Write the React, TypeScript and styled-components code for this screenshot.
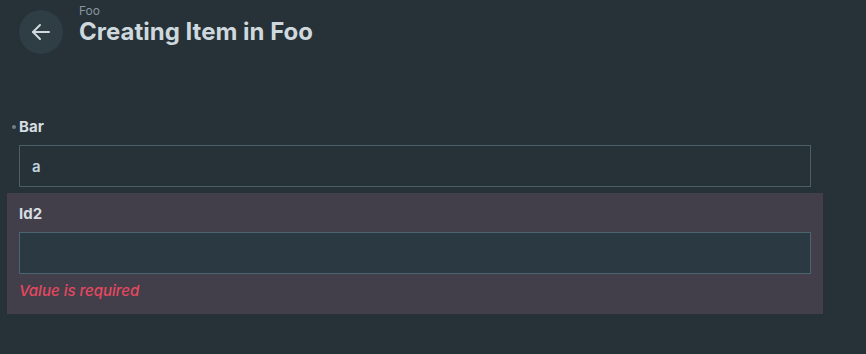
import React from 'react';
import styled, { createGlobalStyle } from 'styled-components';

const GlobalStyle = createGlobalStyle`
  html, body {
    margin: 0;
    padding: 0;
    background: #263238;
    font-family: Inter, "Noto Sans", sans-serif;
  }
`;

const Page = styled.div`
  width: 866px;
  height: 354px;
  background: #263238;
  color: #cfd8dc;
  overflow: hidden;
`;

const Header = styled.div`
  display: flex;
  align-items: flex-start;
  gap: 16px;
  padding: 10px 0 0 19px;
  height: 100px;
  box-sizing: border-box;
`;

const BackButton = styled.button`
  width: 44px;
  height: 44px;
  border-radius: 50%;
  border: none;
  background: #2f3d45;
  display: flex;
  align-items: center;
  justify-content: center;
  padding: 0;
  color: #cfd8dc;
  cursor: pointer;
`;

const Titles = styled.div`
  display: flex;
  flex-direction: column;
  margin-top: -6px;
`;

const Breadcrumb = styled.span`
  font-size: 12px;
  line-height: 14px;
  color: #8796a0;
`;

const Title = styled.h1`
  margin: 0;
  font-size: 24px;
  line-height: 28px;
  font-weight: 700;
  color: #cfd8dc;
`;

const Form = styled.div`
  width: 816px;
  margin-left: 7px;
  padding-top: 11px;
`;

const Field = styled.div<{ $invalid?: boolean }>`
  padding: ${p => (p.$invalid ? '11px 12px 14px' : '6px 12px')};
  background: ${p => (p.$invalid ? '#423f4a' : 'transparent')};
`;

const Label = styled.label<{ $required?: boolean }>`
  position: relative;
  display: block;
  font-size: 15px;
  line-height: 20px;
  font-weight: 700;
  color: #d5dde1;
  margin-bottom: 8px;

  ${p =>
    p.$required &&
    `&::before {
      content: '';
      position: absolute;
      left: -7px;
      top: 8px;
      width: 4px;
      height: 4px;
      border-radius: 50%;
      background: #6f8089;
    }`}
`;

const Input = styled.input<{ $invalid?: boolean }>`
  display: block;
  width: 792px;
  height: 42px;
  box-sizing: border-box;
  border: 1px solid ${p => (p.$invalid ? '#4a6570' : '#4c5f69')};
  background: ${p => (p.$invalid ? '#2b3a42' : '#263238')};
  color: #c3d3de;
  font-family: inherit;
  font-size: 15px;
  font-weight: 600;
  padding: 0 12px;
  outline: none;
`;

const ErrorText = styled.div`
  margin-top: 8px;
  font-size: 15px;
  line-height: 18px;
  font-weight: 500;
  font-style: italic;
  color: #e6485f;
`;

const App: React.FC = () => {
  return (
    <Page>
      <GlobalStyle />
      <Header>
        <BackButton aria-label="Back">
          <svg width="24" height="24" viewBox="0 0 24 24" fill="none" stroke="currentColor" strokeWidth="2" strokeLinecap="round" strokeLinejoin="round">
            <path d="M20 12H4" />
            <path d="M11 5l-7 7 7 7" />
          </svg>
        </BackButton>
        <Titles>
          <Breadcrumb>Foo</Breadcrumb>
          <Title>Creating Item in Foo</Title>
        </Titles>
      </Header>
      <Form>
        <Field>
          <Label $required>Bar</Label>
          <Input defaultValue="a" />
        </Field>
        <Field $invalid>
          <Label>Id2</Label>
          <Input $invalid />
          <ErrorText>Value is required</ErrorText>
        </Field>
      </Form>
    </Page>
  );
};

export default App;
